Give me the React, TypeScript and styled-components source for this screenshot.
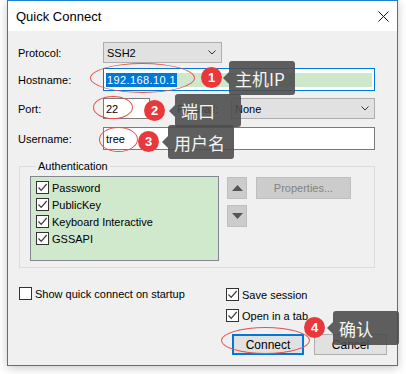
import React from "react";
import styled, { createGlobalStyle } from "styled-components";

const Global = createGlobalStyle`
  html, body { margin: 0; padding: 0; background: #ffffff; }
  body {
    font-family: "Liberation Sans", Arial, sans-serif;
    font-size: 11px;
    color: #000;
  }
  * { box-sizing: border-box; }
`;

const Desk = styled.div`
  position: relative;
  width: 406px;
  height: 374px;
  overflow: hidden;
  padding-left: 7px;
  background: #ffffff;
`;

const Window = styled.div`
  width: 391px;
  height: 366px;
  border: 1px solid #1a7fd6;
  display: flex;
  flex-direction: column;
  box-shadow: 0 2px 9px rgba(0, 0, 0, 0.22);
  background: #f0f0f0;
`;

const TitleBar = styled.div`
  height: 30px;
  flex: none;
  background: #ffffff;
  display: flex;
  align-items: center;
  justify-content: space-between;
  padding: 0 8px 0 8px;
  font-size: 13px;
`;

const CloseIcon = styled.svg`
  width: 11px;
  height: 11px;
  margin-right: 0px;
`;

const Body = styled.div`
  flex: 1;
  padding: 11px 22px 0 10px;
  display: flex;
  flex-direction: column;
`;

const Row = styled.div<{ $h: number; $mt: number }>`
  display: flex;
  align-items: center;
  height: ${(p) => p.$h}px;
  margin-top: ${(p) => p.$mt}px;
`;

const Label = styled.div<{ $w?: number; $ml?: number }>`
  width: ${(p) => p.$w ?? 85}px;
  margin-left: ${(p) => p.$ml ?? 0}px;
  flex: none;
`;

const Select = styled.div<{ $w?: number }>`
  height: 21px;
  ${(p) => (p.$w ? `width: ${p.$w}px; flex: none;` : "flex: 1;")}
  background: #e1e1e1;
  border: 1px solid #adadad;
  display: flex;
  align-items: center;
  justify-content: space-between;
  padding: 0 5px 0 3px;
`;

const Input = styled.div<{ $w?: number; $h?: number; $focus?: boolean }>`
  height: ${(p) => p.$h ?? 23}px;
  ${(p) => (p.$w ? `width: ${p.$w}px; flex: none;` : "flex: 1;")}
  background: #ffffff;
  border: 1px solid ${(p) => (p.$focus ? "#0078d7" : "#7a7a7a")};
  display: flex;
  align-items: center;
  padding: 0 2px 0 2px;
`;

const Selected = styled.span`
  background: #0078d7;
  color: #fff;
  line-height: 14px;
  padding: 0 1px;
  letter-spacing: 0.4px;
`;

const Marker = styled.span`
  flex: 1;
  height: 14px;
  background: #cfe8cc;
`;

const Chevron = () => (
  <svg width="8" height="5" viewBox="0 0 8 5">
    <polyline points="0.5,0.5 4,4 7.5,0.5" fill="none" stroke="#333" strokeWidth="1" />
  </svg>
);

const Group = styled.fieldset`
  margin: 9px 0 0 1px;
  padding: 3px 0 5px 10px;
  border: 1px solid #dcdcdc;
  display: flex;
  align-items: flex-start;
  height: 109px;
`;

const Legend = styled.legend`
  margin-left: 6px;
  padding: 0 2px;
  font-size: 11px;
  line-height: 14px;
`;

const ListBox = styled.div`
  width: 189px;
  height: 85px;
  flex: none;
  background: #d0e8cc;
  border: 1px solid #828790;
  padding: 4px 0 0 5px;
  display: flex;
  flex-direction: column;
  gap: 4px;
`;

const CheckItem = styled.div<{ $gap?: number }>`
  display: flex;
  align-items: center;
  gap: 3px;
  height: 13px;
`;

const Box = styled.span`
  width: 13px;
  height: 13px;
  flex: none;
  border: 1px solid #333;
  background: #fff;
  display: flex;
  align-items: center;
  justify-content: center;
`;

const Arrows = styled.div`
  display: flex;
  flex-direction: column;
  gap: 6px;
  margin: 1px 0 0 8px;
`;

const ArrowBtn = styled.div`
  width: 20px;
  height: 22px;
  background: #cccccc;
  border: 1px solid #bfbfbf;
  display: flex;
  align-items: center;
  justify-content: center;
`;

const PropBtn = styled.div`
  width: 95px;
  height: 22px;
  margin: 1px 0 0 9px;
  background: #cccccc;
  border: 1px solid #bfbfbf;
  color: #838383;
  display: flex;
  align-items: center;
  justify-content: center;
`;

const Bottom = styled.div`
  display: grid;
  grid-template-columns: 208px 1fr;
  margin-top: 19px;
`;

const LeftCol = styled.div`
  padding-left: 1px;
`;

const RightCol = styled.div`
  display: flex;
  flex-direction: column;
  gap: 8px;
  padding-top: 1px;
`;

const Buttons = styled.div`
  display: flex;
  gap: 10px;
  margin: 4px 0 0 6px;
`;

const Button = styled.div<{ $primary?: boolean }>`
  width: ${(p) => (p.$primary ? 72 : 73)}px;
  height: 21px;
  flex: none;
  background: #e1e1e1;
  border: ${(p) => (p.$primary ? "2px solid #0078d7" : "1px solid #adadad")};
  display: flex;
  align-items: center;
  justify-content: center;
  font-size: 12px;
`;

/* annotations layered over the dialog */
const Ellipse = styled.div`
  position: absolute;
  border: 1px solid #e4534c;
  border-radius: 50%;
`;

const Badge = styled.div`
  position: absolute;
  width: 21px;
  height: 21px;
  border-radius: 50%;
  background: #e8383c;
  color: #fff;
  font-family: "Liberation Sans", Arial, sans-serif;
  font-weight: bold;
  font-size: 13px;
  display: flex;
  align-items: center;
  justify-content: center;
`;

const Bubble = styled.div`
  position: absolute;
  background: rgba(78, 78, 78, 0.9);
  border-radius: 3px;
  color: #f4f4f4;
  font-family: "Noto Sans CJK SC", "Noto Sans", sans-serif;
  font-size: 17px;
  display: flex;
  align-items: center;
  padding-left: 6px;
  &::before {
    content: "";
    position: absolute;
    left: -6px;
    top: 50%;
    margin-top: -6px;
    border-style: solid;
    border-width: 6px 6px 6px 0;
    border-color: transparent rgba(78, 78, 78, 0.9) transparent transparent;
  }
`;

const Check = ({ on }: { on: boolean }) => (
  <Box>
    {on && (
      <svg width="11" height="11" viewBox="0 0 11 11">
        <polyline points="1.5,5.5 4.2,8.3 9.7,2" fill="none" stroke="#3a3a3a" strokeWidth="1.2" />
      </svg>
    )}
  </Box>
);

const CheckLine = ({ on, text }: { on: boolean; text: string }) => (
  <CheckItem>
    <Check on={on} />
    <span>{text}</span>
  </CheckItem>
);

export default function App() {
  return (
    <>
      <Global />
      <Desk>
        <Window>
          <TitleBar>
            <span>Quick Connect</span>
            <CloseIcon viewBox="0 0 11 11">
              <path d="M0.5 0.5 L10.5 10.5 M10.5 0.5 L0.5 10.5" stroke="#111" strokeWidth="1" />
            </CloseIcon>
          </TitleBar>
          <Body>
            <Row $h={21} $mt={0}>
              <Label>Protocol:</Label>
              <Select $w={119}>
                <span>SSH2</span>
                <Chevron />
              </Select>
            </Row>
            <Row $h={23} $mt={5}>
              <Label>Hostname:</Label>
              <Input $focus>
                <Selected>192.168.10.1</Selected>
                <Marker />
              </Input>
            </Row>
            <Row $h={23} $mt={6}>
              <Label>Port:</Label>
              <Input $w={47} $h={21}>22</Input>
              <Label $w={54} $ml={27}>Firewall:</Label>
              <Select>
                <span>None</span>
                <Chevron />
              </Select>
            </Row>
            <Row $h={23} $mt={7}>
              <Label>Username:</Label>
              <Input>tree</Input>
            </Row>

            <Group>
              <Legend>Authentication</Legend>
              <ListBox>
                <CheckLine on text="Password" />
                <CheckLine on text="PublicKey" />
                <CheckLine on text="Keyboard Interactive" />
                <CheckLine on text="GSSAPI" />
              </ListBox>
              <Arrows>
                <ArrowBtn>
                  <svg width="11" height="6" viewBox="0 0 11 6">
                    <polygon points="0,6 5.5,0 11,6" fill="#555" />
                  </svg>
                </ArrowBtn>
                <ArrowBtn>
                  <svg width="11" height="6" viewBox="0 0 11 6">
                    <polygon points="0,0 11,0 5.5,6" fill="#555" />
                  </svg>
                </ArrowBtn>
              </Arrows>
              <PropBtn>Properties...</PropBtn>
            </Group>

            <Bottom>
              <LeftCol>
                <CheckLine on={false} text="Show quick connect on startup" />
              </LeftCol>
              <RightCol>
                <CheckLine on text="Save session" />
                <CheckLine on text="Open in a tab" />
                <Buttons>
                  <Button $primary>Connect</Button>
                  <Button>Cancel</Button>
                </Buttons>
              </RightCol>
            </Bottom>
          </Body>
        </Window>

        <Ellipse style={{ left: 90, top: 63, width: 105, height: 30 }} />
        <Ellipse style={{ left: 93, top: 96, width: 40, height: 23 }} />
        <Ellipse style={{ left: 99, top: 127, width: 39, height: 25 }} />
        <Ellipse style={{ left: 221, top: 327, width: 89, height: 27 }} />

        <Badge style={{ left: 201, top: 67 }}>1</Badge>
        <Badge style={{ left: 144, top: 100 }}>2</Badge>
        <Badge style={{ left: 138, top: 131 }}>3</Badge>
        <Badge style={{ left: 304, top: 317 }}>4</Badge>

        <Bubble style={{ left: 229, top: 61, width: 66, height: 34 }}>主机IP</Bubble>
        <Bubble style={{ left: 175, top: 94, width: 66, height: 33 }}>端口</Bubble>
        <Bubble style={{ left: 168, top: 125, width: 66, height: 34 }}>用户名</Bubble>
        <Bubble style={{ left: 333, top: 311, width: 66, height: 34 }}>确认</Bubble>
      </Desk>
    </>
  );
}
